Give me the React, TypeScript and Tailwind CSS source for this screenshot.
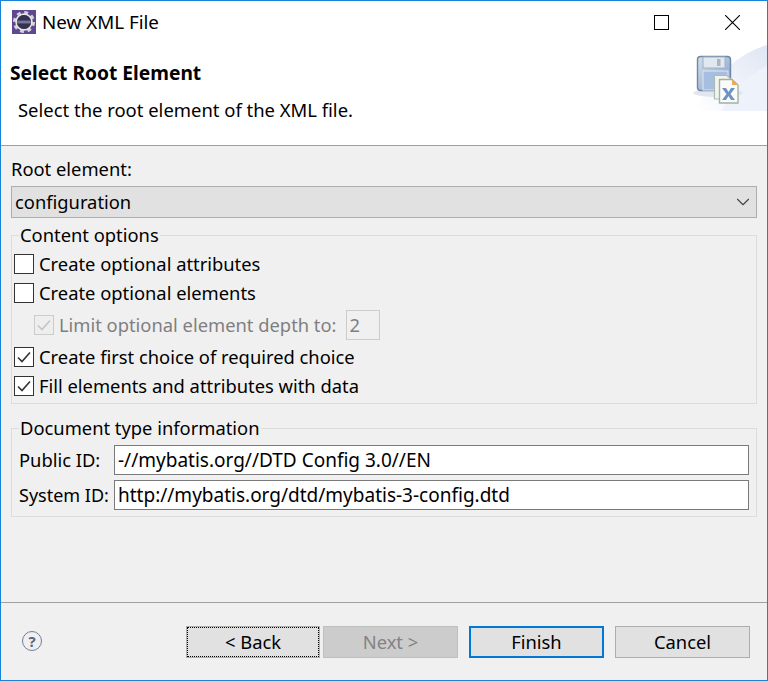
import React from 'react';
import { ChevronDown } from 'lucide-react';

const CheckBox = ({ checked, disabled }: { checked?: boolean; disabled?: boolean }) => (
  <span
    className={`flex h-[20px] w-[20px] shrink-0 items-center justify-center border ${
      disabled ? 'border-[#cccccc] bg-[#eeeeee]' : 'border-[#333333] bg-white'
    }`}
  >
    {checked && (
      <svg width="16" height="14" viewBox="0 0 16 14" fill="none">
        <path d="M2 7.5 L6 11.5 L14 2.5" stroke={disabled ? '#c4c4c4' : '#333333'} strokeWidth="1.6" />
      </svg>
    )}
  </span>
);

const Option = ({ label, checked }: { label: string; checked?: boolean }) => (
  <label className="flex h-[29px] items-center gap-[5px]">
    <CheckBox checked={checked} />
    <span>{label}</span>
  </label>
);

const FooterButton = ({ label, className }: { label: string; className: string }) => (
  <button className={`flex h-[32px] items-center justify-center ${className}`}>{label}</button>
);

const Gear = () => (
  <svg width="24" height="24" viewBox="0 0 25 25">
    <rect width="25" height="25" fill="#5f4690" />
    <circle cx="12.5" cy="12.5" r="10" fill="none" stroke="#d4d4d4" strokeWidth="3" strokeDasharray="4 3.85" />
    <circle cx="12.5" cy="12.5" r="8.2" fill="none" stroke="#e6e6e6" strokeWidth="1.8" />
    <circle cx="12.5" cy="12.5" r="7.3" fill="#34324e" />
    <rect x="5.5" y="11" width="14" height="3" fill="#77779a" />
  </svg>
);

const BannerArt = () => (
  <svg width="75" height="67" viewBox="0 0 75 67">
    <defs>
      <linearGradient id="wash" x1="0" y1="1" x2="1" y2="0">
        <stop offset="0" stopColor="#ffffff" />
        <stop offset="1" stopColor="#dfe6f4" />
      </linearGradient>
      <linearGradient id="disk" x1="0" y1="0" x2="1" y2="1">
        <stop offset="0" stopColor="#d5dfeb" />
        <stop offset="1" stopColor="#7f9fcb" />
      </linearGradient>
    </defs>
    <path d="M3 67 C20 30 50 8 75 1 L75 67 Z" fill="url(#wash)" />
    <path d="M30 67 C40 45 58 30 75 22 L75 67 Z" fill="#eef2fa" />
    <ellipse cx="26" cy="49" rx="25" ry="4" fill="#e3e6ee" />
    <rect x="5.5" y="12.5" width="33" height="34" rx="3" fill="url(#disk)" stroke="#6f86a6" strokeWidth="1.4" />
    <rect x="11" y="13" width="22" height="11" fill="#e2e8f0" stroke="#9fb0c4" />
    <rect x="25" y="15" width="3.5" height="7" fill="#a8b6c6" />
    <rect x="11" y="27" width="25" height="19" fill="#a6bedf" stroke="#dfe7f1" />
    <path d="M22.5 31.5 H35 L41 37 V55 H22.5 Z" fill="#f5f4ec" stroke="#a9bdb4" strokeWidth="1.2" />
    <path d="M27.5 35.5 H40 L46 41 V59 H27.5 Z" fill="#fbfbf8" stroke="#9fb1ad" strokeWidth="1.4" />
    <path d="M40 35.5 L46 41 H40 Z" fill="#eda95a" />
    <path d="M30 44 H34 L36.5 48 L39 44 H43 L38.5 50 L43 56 H39 L36.5 52 L34 56 H30 L34.5 50 Z" fill="#6d92c5" />
  </svg>
);

const App = () => {
  return (
    <div className="flex h-[681px] w-[768px] flex-col border border-[#1883d7] bg-[#f0f0f0] font-['Noto_Sans','Open_Sans',sans-serif] text-[18.35px] leading-[24px] text-black">
      {/* Title bar + banner */}
      <div className="h-[145px] shrink-0 border-b border-[#a0a0a0] bg-white">
        <div className="flex h-[42px] items-center pl-[11px]">
          <Gear />
          <span className="ml-[6px] grow text-[18.8px]">New XML File</span>
          <span className="mr-[56px] h-[15px] w-[15px] border-[1.5px] border-black" />
          <svg className="mr-[27px]" width="15" height="15" viewBox="0 0 15 15" fill="none">
            <path d="M0 0 L15 15 M15 0 L0 15" stroke="black" strokeWidth="1.1" />
          </svg>
        </div>
        <div className="flex h-[100px] items-start">
          <div className="grow pl-[9px] pt-[18px]">
            <div className="text-[19.2px] font-bold">Select Root Element</div>
            <div className="mt-[13px] pl-[8px] text-[18.45px]">Select the root element of the XML file.</div>
          </div>
          <div className="mt-[1px] shrink-0">
            <BannerArt />
          </div>
        </div>
      </div>

      {/* Page body */}
      <div className="flex grow flex-col px-[10px] pt-[11px]">
        <div>Root element:</div>
        <div className="mt-[5px] flex h-[32px] items-center justify-between border border-[#adadad] bg-[#e1e1e1] pl-[3px] pr-[2px]">
          <span>configuration</span>
          <ChevronDown className="h-[22px] w-[22px] text-[#444444]" strokeWidth={1.2} />
        </div>

        <fieldset className="mt-[5px] h-[181px] border border-[#dcdcdc] pl-[2px] pr-[6px]">
          <legend className="ml-[5px] px-[1px]">Content options</legend>
          <div className="pt-[2px]">
            <Option label="Create optional attributes" />
            <Option label="Create optional elements" />
            <label className="flex h-[35px] items-center pl-[20px] text-[#7f7f7f]">
              <CheckBox checked disabled />
              <span className="ml-[5px]">Limit optional element depth to:</span>
              <span className="ml-[9px] flex h-[30px] w-[34px] items-center border border-[#cccccc] pl-[3px]">2</span>
            </label>
            <Option label="Create first choice of required choice" checked />
            <Option label="Fill elements and attributes with data" checked />
          </div>
        </fieldset>

        <fieldset className="mt-[12px] h-[101px] border border-[#dcdcdc] pl-[7px] pr-[7px]">
          <legend className="px-[1px]">Document type information</legend>
          <div className="mt-[5px] flex h-[30px] items-center">
            <span className="w-[95px] shrink-0">Public ID:</span>
            <div className="flex h-[30px] grow items-center border border-[#7a7a7a] bg-white pl-[3px] text-[19px]">-//mybatis.org//DTD Config 3.0//EN</div>
          </div>
          <div className="mt-[5px] flex h-[30px] items-center">
            <span className="w-[95px] shrink-0 text-[18px]">System ID:</span>
            <div className="flex h-[30px] grow items-center border border-[#7a7a7a] bg-white pl-[3px] text-[19px]">http://mybatis.org/dtd/mybatis-3-config.dtd</div>
          </div>
        </fieldset>
      </div>

      {/* Button bar */}
      <div className="flex h-[78px] shrink-0 items-start border-t border-[#a0a0a0] pl-[21px] pr-[17px] pt-[23px]">
        <div className="mt-[5px] flex h-[20px] w-[20px] items-center justify-center rounded-full border-[1.5px] border-[#6d7f9e] text-[15px] font-bold leading-none text-[#55688a]">?</div>
        <div className="ml-auto flex gap-[3px]">
          <FooterButton label="< Back" className="w-[134px] border border-[#adadad] bg-[#e1e1e1] outline-1 -outline-offset-2 outline-dotted outline-black" />
          <FooterButton label="Next >" className="w-[135px] border border-[#bfbfbf] bg-[#cccccc] text-[#838383]" />
          <FooterButton label="Finish" className="ml-[8px] w-[135px] border-2 border-[#0078d7] bg-[#e1e1e1]" />
          <FooterButton label="Cancel" className="ml-[8px] w-[135px] border border-[#adadad] bg-[#e1e1e1]" />
        </div>
      </div>
    </div>
  );
};

export default App;
